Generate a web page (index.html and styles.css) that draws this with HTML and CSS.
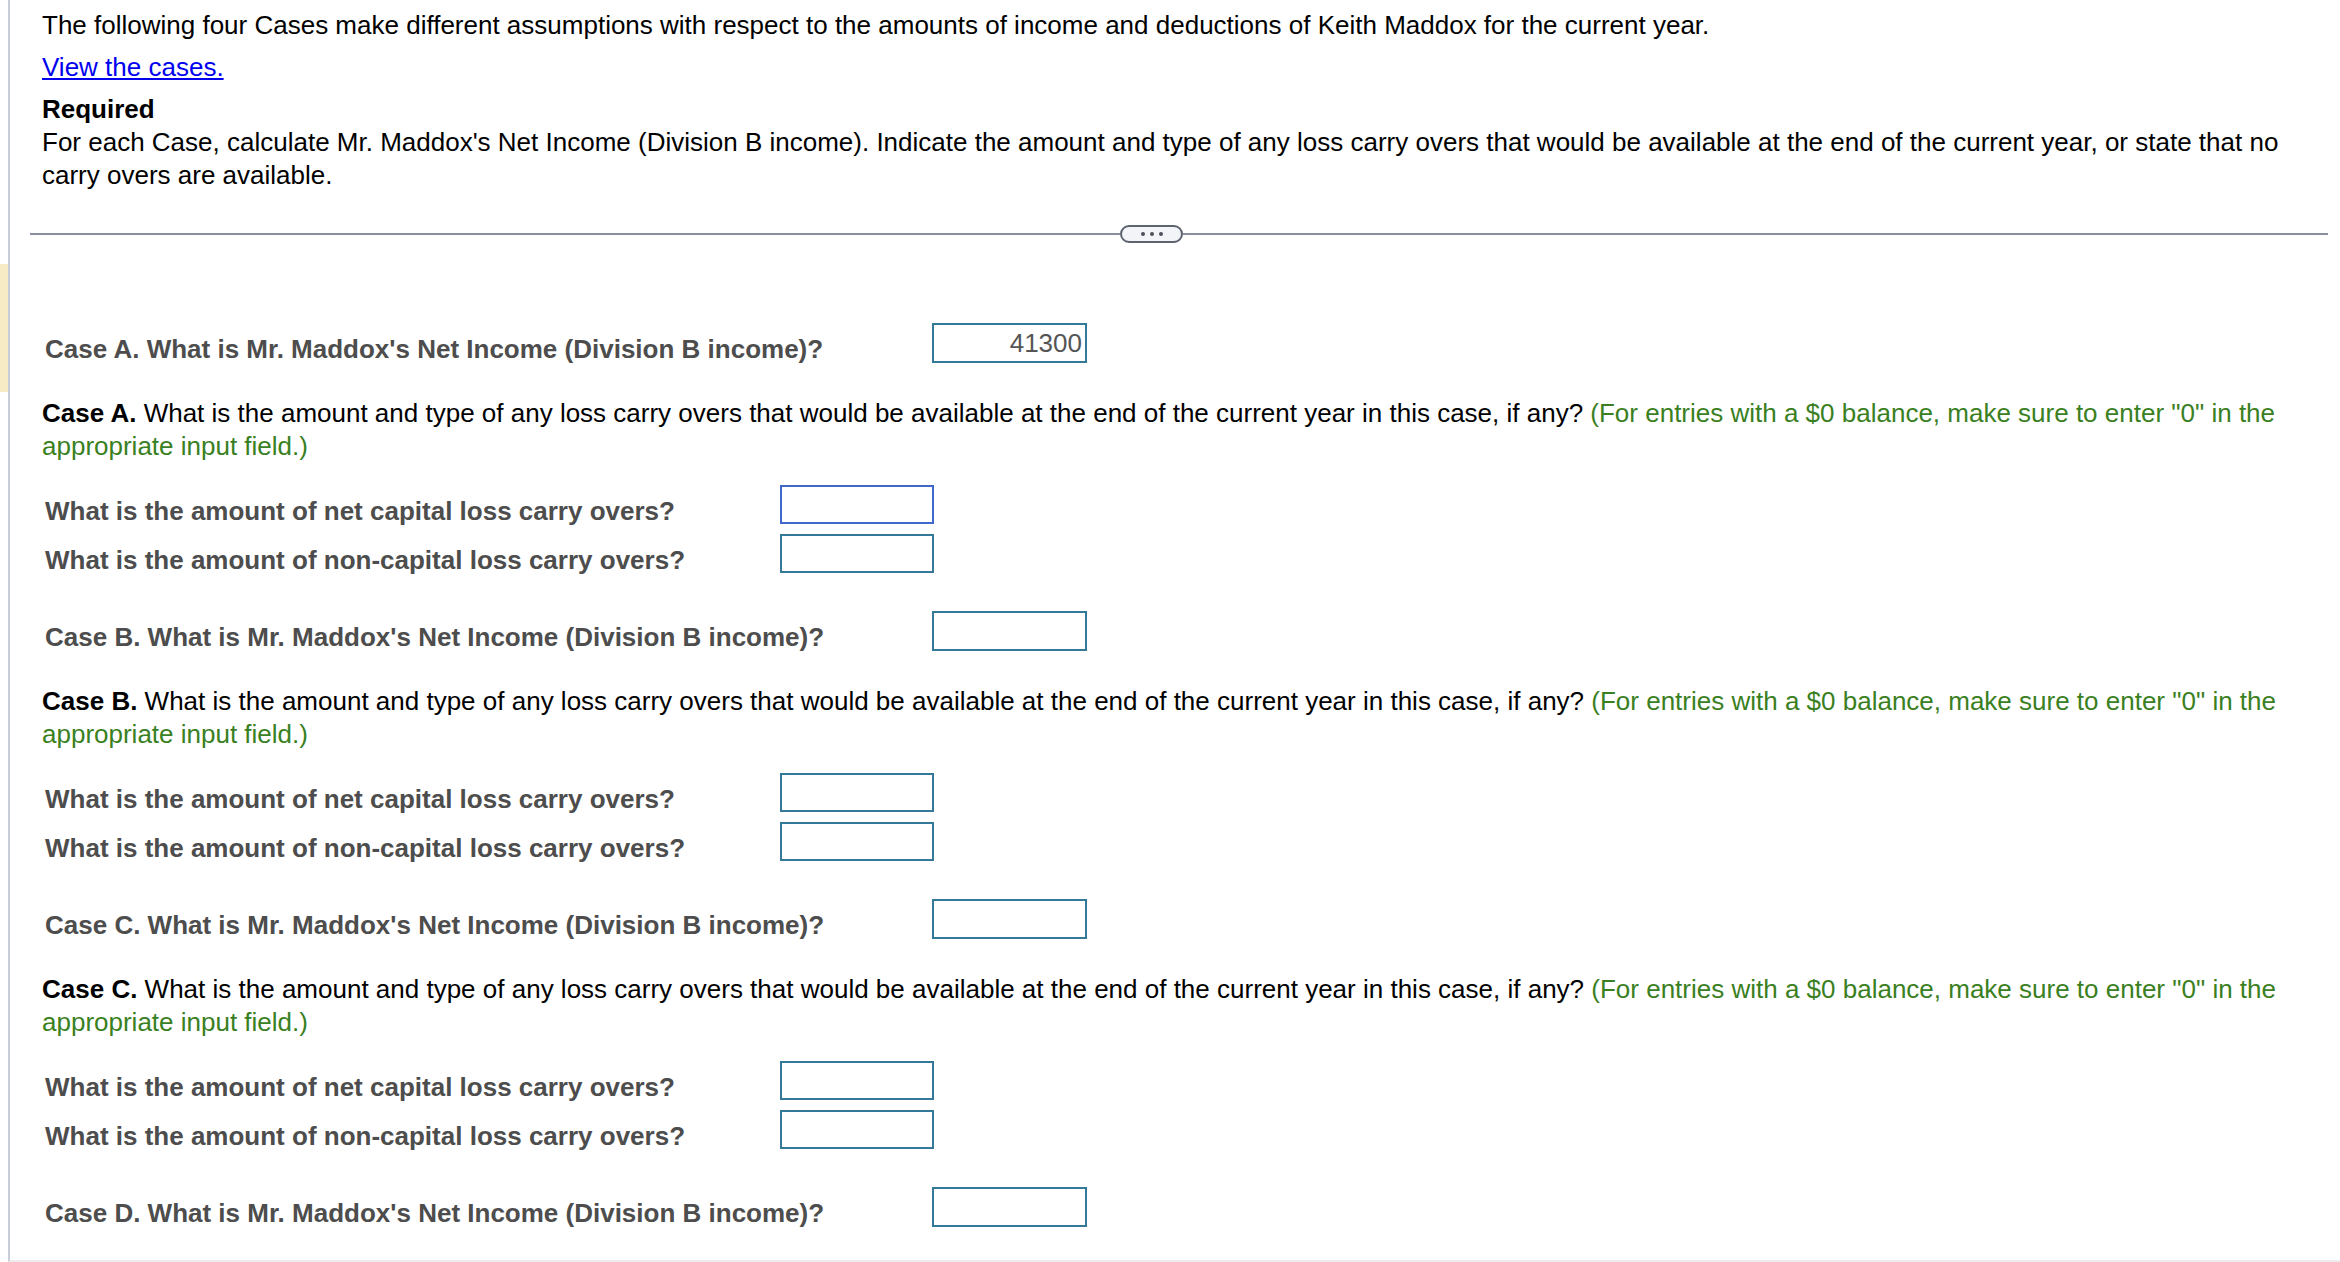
FILE: index.html
```html
<!DOCTYPE html>
<html lang="en">
<head>
<meta charset="utf-8">
<title>Keith Maddox – Net Income cases</title>
<link rel="stylesheet" href="styles.css">
</head>
<body>
<div class="page">
  <span class="marker"></span>
  <div class="intro">
    <p>The following four Cases make different assumptions with respect to the amounts of income and deductions of Keith Maddox for the current year.</p>
    <p><a class="link" href="#">View the cases.</a></p>
    <div class="required"><strong>Required</strong><br>For each Case, calculate Mr. Maddox's Net Income (Division B income). Indicate the amount and type of any loss carry overs that would be available at the end of the current year, or state that no carry overs are available.</div>
  </div>

  <div class="divider">
    <span class="rule rule-left"></span>
    <button class="more" type="button" aria-label="More"><span class="dot"></span><span class="dot"></span><span class="dot"></span></button>
    <span class="rule rule-right"></span>
  </div>

  <div class="questions">
    <section class="case">
      <div class="row net"><span class="label">Case A. What is Mr. Maddox's Net Income (Division B income)?</span><input class="field field-net" type="text" value="41300"></div>
      <p class="prompt"><b>Case A.</b> What is the amount and type of any loss carry overs that would be available at the end of the current year in this case, if any? <span class="hint">(For entries with a $0 balance, make sure to enter "0" in the appropriate input field.)</span></p>
      <div class="row loss first"><span class="label">What is the amount of net capital loss carry overs?</span><input class="field field-loss focused" type="text" value=""></div>
      <div class="row loss"><span class="label">What is the amount of non-capital loss carry overs?</span><input class="field field-loss" type="text" value=""></div>
    </section>

    <section class="case">
      <div class="row net"><span class="label">Case B. What is Mr. Maddox's Net Income (Division B income)?</span><input class="field field-net" type="text" value=""></div>
      <p class="prompt"><b>Case B.</b> What is the amount and type of any loss carry overs that would be available at the end of the current year in this case, if any? <span class="hint">(For entries with a $0 balance, make sure to enter "0" in the appropriate input field.)</span></p>
      <div class="row loss first"><span class="label">What is the amount of net capital loss carry overs?</span><input class="field field-loss" type="text" value=""></div>
      <div class="row loss"><span class="label">What is the amount of non-capital loss carry overs?</span><input class="field field-loss" type="text" value=""></div>
    </section>

    <section class="case">
      <div class="row net"><span class="label">Case C. What is Mr. Maddox's Net Income (Division B income)?</span><input class="field field-net" type="text" value=""></div>
      <p class="prompt"><b>Case C.</b> What is the amount and type of any loss carry overs that would be available at the end of the current year in this case, if any? <span class="hint">(For entries with a $0 balance, make sure to enter "0" in the appropriate input field.)</span></p>
      <div class="row loss first"><span class="label">What is the amount of net capital loss carry overs?</span><input class="field field-loss" type="text" value=""></div>
      <div class="row loss"><span class="label">What is the amount of non-capital loss carry overs?</span><input class="field field-loss" type="text" value=""></div>
    </section>

    <section class="case">
      <div class="row net"><span class="label">Case D. What is Mr. Maddox's Net Income (Division B income)?</span><input class="field field-net" type="text" value=""></div>
    </section>
  </div>
</div>
</body>
</html>
```

FILE: styles.css
```css
* { box-sizing: border-box; }

html, body {
  margin: 0;
  padding: 0;
  background: #ffffff;
}

body {
  font-family: "Liberation Sans", Arial, Helvetica, sans-serif;
  font-size: 26px;
  line-height: 33px;
  color: #000000;
}

.page {
  position: relative;
  margin-left: 8px;
  width: 2332px;
  height: 1262px;
  border-left: 2px solid #c9cdda;
  border-bottom: 2px solid #ececef;
  padding-top: 9px;
}

.marker {
  position: absolute;
  left: -10px;
  top: 264px;
  width: 8px;
  height: 128px;
  background: #f7ebc6;
}

.intro {
  padding: 0 10px 0 32px;
}

.intro p {
  margin: 0 0 9px 0;
}

.link {
  color: #0000ee;
  text-decoration: underline;
}

.required strong {
  font-weight: bold;
}

.divider {
  display: flex;
  align-items: center;
  height: 18px;
  margin: 33px 12px 0 20px;
}

.rule {
  display: block;
  height: 2px;
  background: #8a8fa0;
}

.rule-left {
  width: 1090px;
}

.rule-right {
  flex: 1;
}

.more {
  display: flex;
  align-items: center;
  justify-content: center;
  gap: 5px;
  width: 63px;
  height: 18px;
  padding: 0;
  margin: 0;
  border: 2px solid #5d6470;
  border-radius: 9px;
  background: #f2f4f7;
}

.dot {
  display: block;
  width: 4px;
  height: 4px;
  border-radius: 50%;
  background: #4b505a;
}

.questions {
  padding: 80px 10px 0 32px;
}

.case + .case {
  margin-top: 38px;
}

.row {
  display: flex;
  align-items: flex-start;
}

.label {
  display: block;
  padding-left: 3px;
  margin-top: 13px;
  line-height: 26px;
  font-weight: bold;
  color: #4d4d4d;
}

.row.net .label {
  width: 890px;
}

.row.loss .label {
  width: 738px;
}

.field {
  display: block;
  margin: 0;
  border: 2px solid #35799a;
  border-radius: 0;
  background: #ffffff;
  font-family: "Liberation Sans", Arial, Helvetica, sans-serif;
  font-size: 26px;
  color: #555555;
  text-align: right;
  padding: 0 3px 0 4px;
  outline: none;
}

.field-net {
  width: 155px;
  height: 40px;
}

.field-loss {
  width: 154px;
  height: 39px;
}

.field.focused {
  border-color: #4067c9;
}

.prompt {
  margin: 34px 0 0 0;
}

.prompt b {
  font-weight: bold;
}

.hint {
  color: #3a7f22;
}

.row.loss.first {
  margin-top: 22px;
}

.row.loss + .row.loss {
  margin-top: 10px;
}
```
